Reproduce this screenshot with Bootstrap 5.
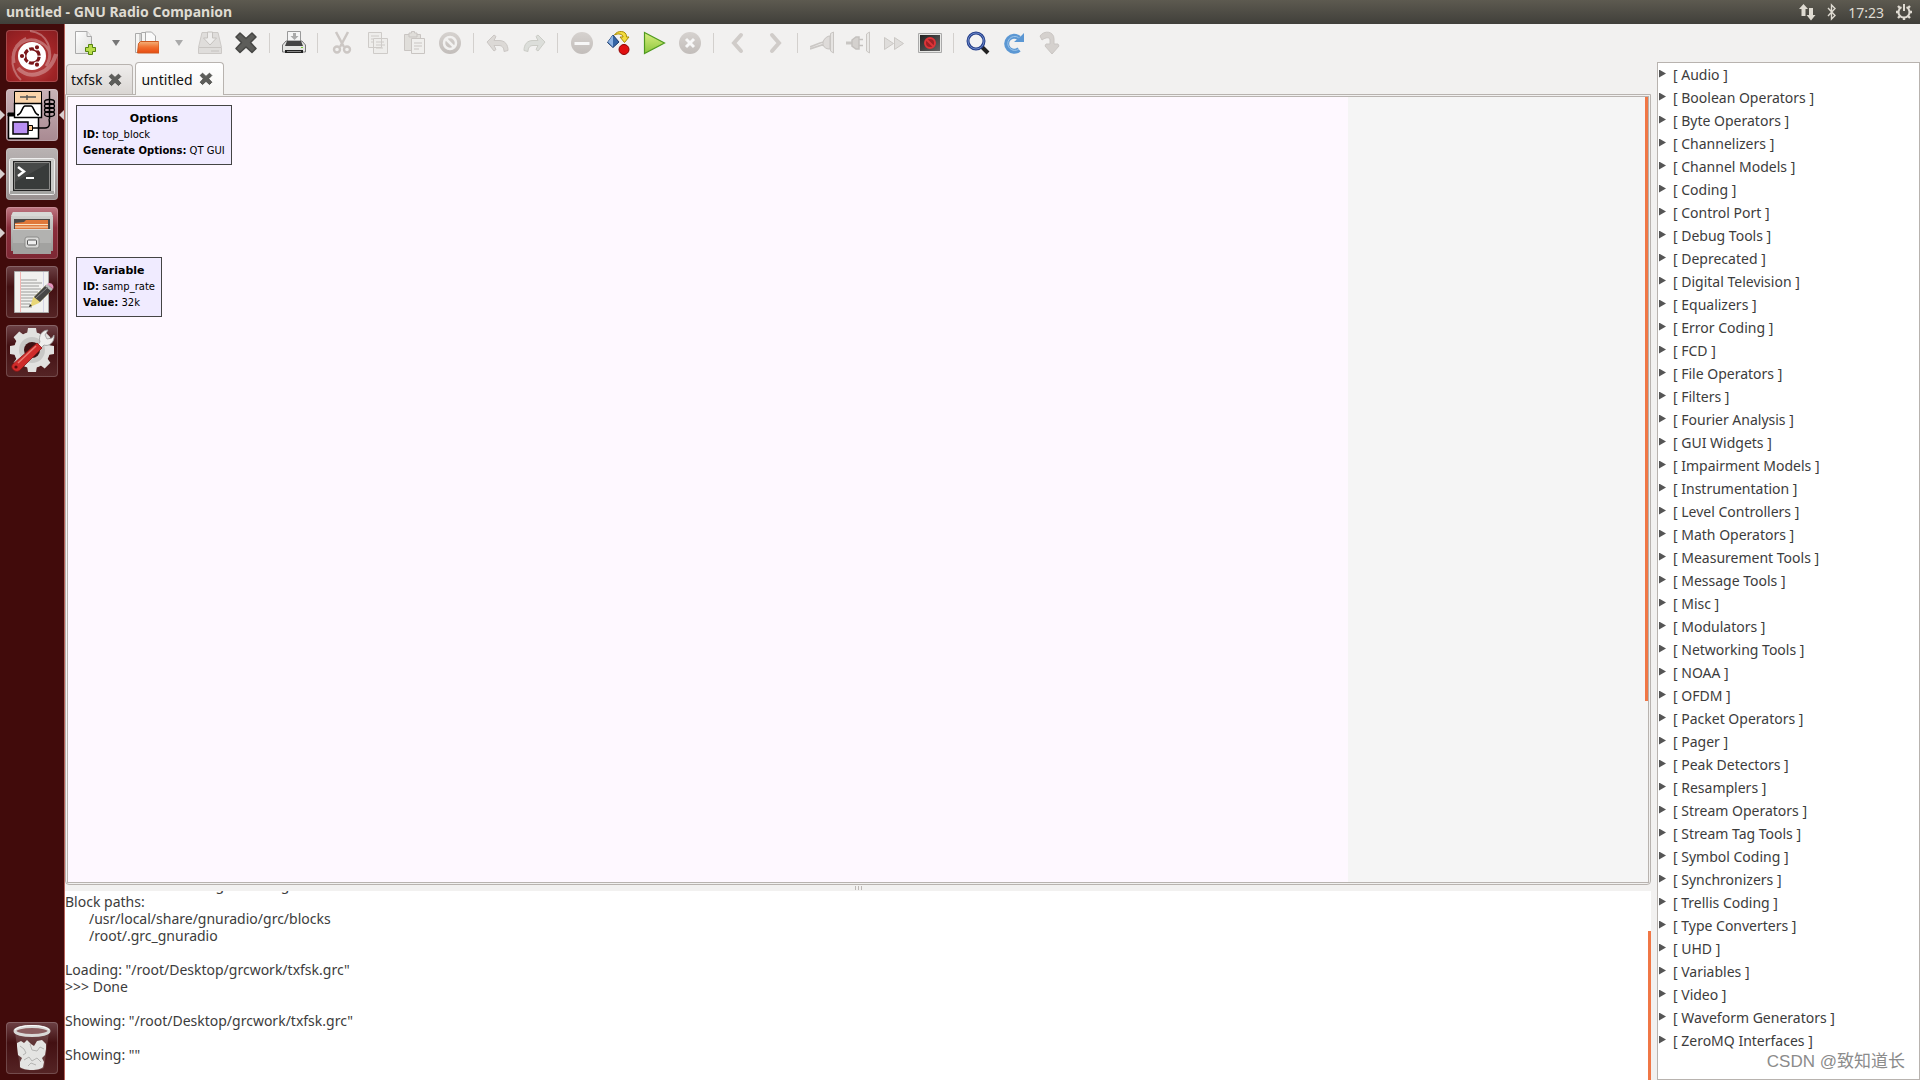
<!DOCTYPE html>
<html lang="en">
<head>
<meta charset="utf-8">
<meta name="viewport" content="width=device-width, initial-scale=1">
<title>untitled - GNU Radio Companion</title>
<link href="https://cdn.jsdelivr.net/npm/bootstrap@5.3.0/dist/css/bootstrap.min.css" rel="stylesheet">
<style>
body{font-family:"Noto Sans","Noto Sans CJK SC",sans-serif;font-size:14px;line-height:17px;color:#3c3c3c;background:#f2f1f0}
button,input,textarea{font:inherit;color:inherit}
.plain{border:0;background:none;padding:0;display:flex;align-items:center;justify-content:center}
.topbar{height:24px;flex:none;background:linear-gradient(#5d5a50,#403f3a);color:#dfdbd2;padding:0 7px 0 6px}
.topbar h1{font-size:14px;line-height:24px;font-weight:700}
.indicators{gap:11px}
.launcher{width:65px;flex:none;background:#410b0b;border-right:1px solid #b5625a;padding:6px 0 6px 6px}
.launcher nav{gap:7px}
.tile{width:52px;height:52px;border-radius:4px;position:relative;box-shadow:inset 0 0 0 1px #ffffff2e}
.tile.run::before{content:"";position:absolute;left:-6px;top:21px;border:5px solid transparent;border-left-color:#d8cfcf;border-right:0}
.tile.cur::after{content:"";position:absolute;right:-6px;top:21px;border:5px solid transparent;border-right-color:#d8cfcf;border-left:0}
.t-dash{background:radial-gradient(circle at 50% 60%,#c0504e,#a02426 60%,#871d20)}
.t-grc{background:linear-gradient(#c9b3b8,#a98a92)}
.t-term{background:linear-gradient(#b9b3b3,#989090)}
.t-files{background:linear-gradient(#c07884,#8a2d3b 40%,#7d2733)}
.t-dark{background:linear-gradient(#6d4246,#431012 40%,#552425)}
.toolbar{height:38px;padding-left:1px}
.tool{width:36px;height:38px}
.more{width:27px;height:38px}
.sep{width:12px;height:20px;flex:none;background:linear-gradient(#d3d0cd,#d3d0cd) 5px 0/1px 100% no-repeat}
.leftcol{min-width:0}
.tabs{height:32px;padding-left:1px}
.gtab{border:1px solid #b8b3af;border-bottom:0;border-radius:4px 4px 0 0;color:#111;gap:6px;height:30px;padding:0 10px 0 4px;background:linear-gradient(#efedec,#dad6d3)}
.gtab.active{height:33px;background:linear-gradient(#fff,#f5f4f2);margin:0 0 -1px 2px;padding-left:5px;position:relative;z-index:1}
.gtab svg{width:14px;height:14px}
.book{border:1px solid #b8b3af;border-radius:0 0 4px 4px;padding:1px;min-height:0}
.sheetwrap{border:1px solid #b8b3af;background:#f5f5f5;min-height:0}
.sheet{flex:0 1 1280px;background:#fef8ff;position:relative}
.thumb{width:3px;background:#f07746}
.block{position:absolute;background:#f0ebff;border:1px solid #444;color:#000;font:10px/16px "DejaVu Sans",sans-serif;padding:5px 6px;white-space:nowrap}
.block h2{font:bold 11px/16px "DejaVu Sans",sans-serif;text-align:center;margin:0}
.b-options{left:8px;top:8px}
.b-variable{left:8px;top:160px}
.grip{height:6px;gap:2px}
.grip i{width:1px;height:4px;background:#bdb8b5}
.console{height:189px;flex:none;background:#fff}
.log{height:100%;overflow:hidden;display:flex;flex-direction:column;justify-content:flex-end}
.log pre{font:inherit;margin:0;padding-bottom:17px;tab-size:24px;overflow:visible}
.lib{width:263px;flex:none;margin:38px 0 0 6px;background:#fff;border:1px solid #b8b3af;position:relative}
.lib ul{padding:0 0 0 1px}
.lib button{display:flex;align-items:center;border:0;background:none;padding:0;width:100%;height:23px;white-space:nowrap}
.lib button::before{content:"";width:7px;height:8px;margin:0 7px 2px 0;background:#555;clip-path:polygon(0 0,100% 50%,0 100%)}
.wm{position:absolute;right:14px;bottom:5px;font:17px/24px "Liberation Sans","Noto Sans CJK SC",sans-serif;color:#8b8b8b}
</style>
</head>
<body>
<svg width="0" height="0" class="position-absolute" aria-hidden="true">
<defs>
<linearGradient id="gor" x1="0" y1="0" x2="0" y2="1"><stop offset="0" stop-color="#f4b27a"/><stop offset=".5" stop-color="#f07030"/><stop offset="1" stop-color="#e84a10"/></linearGradient>
<linearGradient id="ggr" x1="0" y1="0" x2="0" y2="1"><stop offset="0" stop-color="#d9ee80"/><stop offset="1" stop-color="#8cc63c"/></linearGradient>
<linearGradient id="gpg" x1="0" y1="0" x2="1" y2="1"><stop offset="0" stop-color="#fff"/><stop offset="1" stop-color="#dcdcda"/></linearGradient>
<linearGradient id="gdk" x1="0" y1="0" x2="1" y2="1"><stop offset="0" stop-color="#222"/><stop offset="1" stop-color="#666"/></linearGradient>
<linearGradient id="gmt" x1="0" y1="0" x2="0" y2="1"><stop offset="0" stop-color="#d5d5d3"/><stop offset="1" stop-color="#989896"/></linearGradient>
<linearGradient id="gds" x1="0" y1="0" x2="0" y2="1"><stop offset="0" stop-color="#d6d2cf"/><stop offset="1" stop-color="#c2bdba"/></linearGradient>
<symbol id="cross" viewBox="0 0 24 24"><path d="M2 6L6 2 12 7.500 18 2 22 6 16.500 11.500 22 17.500 18 21.500 12 16 6 21.500 2 17.500 7.500 11.500Z" fill="#5d5d5a" stroke="#474745" stroke-width="1.500" stroke-linejoin="round"/></symbol>
</defs>
</svg>
<div class="d-flex flex-column vh-100 overflow-hidden">
<header class="topbar d-flex align-items-center justify-content-between">
<h1 class="m-0">untitled - GNU Radio Companion</h1>
<div class="indicators d-flex align-items-center">
<button class="plain" aria-label="Network"><svg width="18" height="18" viewBox="0 0 18 18" fill="#dfdbd2"><path d="M5.500 1L10 6H7.500v7h-4V6H1zM11 5h4v7h2.500L13 17.500 8.500 12H11z"/></svg></button>
<button class="plain" aria-label="Bluetooth"><svg width="10" height="18" viewBox="0 0 10 18" fill="none" stroke="#dfdbd2" stroke-width="1.400"><path d="M1 5l7 7.500-3.500 3.500V2L8 5.500 1 13"/></svg></button>
<time>17:23</time>
<button class="plain" aria-label="Session"><svg width="18" height="18" viewBox="0 0 18 18" fill="none" stroke="#dfdbd2"><path d="M6.500 4.200a5.500 5.500 0 1 0 5 0" stroke-width="2"/><path d="M9 1v7" stroke-width="2"/><path d="M3 3l2 2M15 3l-2 2M1 9h2.500M14.500 9H17M3 15l2-2M15 15l-2-2M9 14v3" stroke-width="2.400"/></svg></button>
</div>
</header>
<div class="d-flex flex-grow-1" style="min-height:0">
<aside class="launcher d-flex flex-column justify-content-between">
<nav class="d-flex flex-column" aria-label="Launcher">
<button class="plain tile t-dash" aria-label="Search your computer"><svg width="52" height="52" viewBox="0 0 52 52"><g fill="none" stroke="#fff" opacity=".3"><path d="M8 33C4 16 20 5 34 12s10 18 6 24" stroke-width="3"/><path d="M15 50C2 38 4 15 20 8M24 1c18 2 24 20 17 34" stroke-width="2"/><path d="M12 38c10 12 32 8 38-14" stroke-width="4"/></g><circle cx="26" cy="26" r="14" fill="#fff"/><circle cx="26" cy="26" r="7.200" fill="none" stroke="#7a1518" stroke-width="3.200" stroke-dasharray="13.500 1.600" stroke-dashoffset="-.8"/><g fill="#7a1518" stroke="#fff" stroke-width="1.200"><circle cx="16" cy="26" r="2.700"/><circle cx="31" cy="17.300" r="2.700"/><circle cx="31" cy="34.700" r="2.700"/></g></svg></button>
<button class="plain tile run cur t-grc" aria-label="GNU Radio Companion"><svg width="52" height="52" viewBox="0 0 52 52" stroke="#000"><path d="M2.500 25h30v24.500h-30z" fill="#fff" stroke-width="1.500"/><path d="M2 24h6v3H2z" fill="#000"/><path d="M8.500 2.500h27v12h-27z" fill="#fbd5ab"/><path d="M8.500 14.500h27v14h-27z" fill="#fff" stroke-width="1.400"/><path d="M14 8h16M21 6v5" stroke="#555" stroke-width="1.400"/><path d="M11 26c5 0 5-9 8-9h6c3 0 3 9 8 9" fill="none" stroke-width="1.500"/><path d="M7 33h15v12H7z" fill="#b98ff3" stroke-width="1.500"/><path d="M22.500 36.500h4v5h-4z" fill="#fbc58f"/><path d="M27 39h12c5 0 5-4 4-9M43.500 2v28" fill="none" stroke-width="1.400"/><g fill="none" stroke-width="1.300"><ellipse cx="43.500" cy="13" rx="5" ry="2.500"/><ellipse cx="43.500" cy="17" rx="5" ry="2.500"/><ellipse cx="43.500" cy="21" rx="5" ry="2.500"/><ellipse cx="43.500" cy="25" rx="5" ry="2.500"/></g></svg></button>
<button class="plain tile run t-term" aria-label="Terminal"><svg width="52" height="52" viewBox="0 0 52 52"><rect x="3.500" y="10.500" width="45" height="36" rx="2" fill="#c9c9c7" stroke="#eee"/><path d="M4 43h44v3H4z" fill="#a4a4a2"/><path d="M7 13h38v30H7z" fill="#222"/><path d="M8.500 14.500h35v27h-35z" fill="#393c3b" stroke="#8a8a88"/><path d="M9 15h34L9 34z" fill="#555" opacity=".5"/><path d="M12 19l6 4.500-6 4.500" fill="none" stroke="#fff" stroke-width="2.400"/><path d="M20 30h8" stroke="#fff" stroke-width="2"/></svg></button>
<button class="plain tile run t-files" aria-label="Files"><svg width="52" height="52" viewBox="0 0 52 52"><path d="M7 5h38l2 5v34H5V10z" fill="url(#gmt)"/><path d="M7 5h38l2 4H5z" fill="#d8d8d6"/><path d="M8 12h36v10H8z" fill="#4c4a48"/><path d="M9 16l9-1 2-2h22v9H9z" fill="#e0783a"/><path d="M9 17.500h33M9 20h33" stroke="#fce1c1"/><path d="M7 22h38v25H7z" fill="#b2b2b0"/><path d="M7 22.500h38" stroke="#d9d9d7"/><path d="M7 36h38v11H7z" fill="#a2a2a0"/><rect x="19" y="30" width="14" height="11" rx="2" fill="#d9d9d7" stroke="#8b8b89"/><rect x="21.500" y="33" width="9" height="5" rx="1" fill="#eee" stroke="#555"/></svg></button>
<button class="plain tile t-dark" aria-label="Text Editor"><svg width="52" height="52" viewBox="0 0 52 52"><path d="M8.500 5.500h34v41h-34z" fill="#f1f1ef" stroke="#aaa"/><path d="M14.500 6v40" stroke="#f1b5b2"/><path d="M37.500 6v40" stroke="#d5d5e6"/><path d="M15 14h16M15 17h21M15 20h18M15 23h20M15 26h17M15 29h19M15 32h12M15 35h14M15 38h9M15 41h11" stroke="#9b9b99"/><path d="M24 41l3-9 13-13 6 5-13 13z" fill="#e9d777"/><path d="M28 31l12-12 6 5-12 12z" fill="#484846"/><path d="M39 20l2-2 6 5-2 2z" fill="#bbb"/><path d="M41 18c3-3 8 1 6 5z" fill="#e495bd"/><path d="M23 41l1-3 2 2z" fill="#222"/><path d="M30 32l12-11" stroke="#888"/></svg></button>
<button class="plain tile t-dark" aria-label="System Settings"><svg width="52" height="52" viewBox="0 0 52 52"><g fill="#e1e1df"><circle cx="26" cy="25" r="18"/><path d="M21 9l1-6h8l1 6v32l-1 6h-8l-1-6z"/><path d="M21 9l1-6h8l1 6v32l-1 6h-8l-1-6z" transform="rotate(45 26 25)"/><path d="M21 9l1-6h8l1 6v32l-1 6h-8l-1-6z" transform="rotate(90 26 25)"/><path d="M21 9l1-6h8l1 6v32l-1 6h-8l-1-6z" transform="rotate(135 26 25)"/></g><circle cx="26" cy="25" r="13" fill="#c8c8c6"/><circle cx="26" cy="25" r="8" fill="#3f1214"/><path d="M31 21l3-4c-2-6 2-12 8-12l-3 5 2 4 5-1 2-3c1 7-5 12-10 10l-4 4z" fill="#efefed" stroke="#999" stroke-width=".8"/><path d="M31 18l5 5-22 22c-4 4-11-2-7-6z" fill="#cf2b2a" stroke="#8d1515" stroke-width=".8"/><path d="M30 21L12 38" stroke="#e97b72" stroke-width="1.500"/><circle cx="10" cy="42" r="1.600" fill="#5b0c0c"/></svg></button>
</nav>
<button class="plain tile t-dark" aria-label="Trash"><svg width="52" height="52" viewBox="0 0 52 52"><path d="M9 10h34l-5 36c-3 3-21 3-24 0z" fill="#fff" opacity=".15"/><path d="M11 21l4-2 3 2 3-3 4 4 3 2 3-5 5-1 4 4v5l-1 6-3 3 2 4-1 5c-3 4-19 4-23 0v-5l2-4-4-3-1-9z" fill="#e4e4e2"/><path d="M14 24l4 3 2 4-3 2M24 22l2 6 5 1 3-4 4 2M18 38l5-3 3 4 5-3 4 4M22 44l3-3 5 2" stroke="#b4b4b2" fill="none"/><ellipse cx="26" cy="9" rx="17" ry="4.500" fill="#8a5d5f" stroke="#d9d9d7" stroke-width="3"/><path d="M9 8c4-6 30-6 34 0" stroke="#fff" fill="none"/></svg></button>
</aside>
<main class="leftcol d-flex flex-column flex-grow-1">
<div class="toolbar d-flex align-items-center flex-shrink-0" role="toolbar" aria-label="Main toolbar">
<button class="plain tool" aria-label="New"><svg width="24" height="24" viewBox="0 0 24 24"><path d="M3.500.500H15l4.500 5v17h-16z" fill="url(#gpg)" stroke="#aaa"/><path d="M15 .500v5h4.500" fill="#eee" stroke="#aaa"/><path d="M16.500 13.500h4v3h3v4h-3v3h-4v-3h-3v-4h3z" fill="#b9dc4b" stroke="#55840f"/></svg></button>
<button class="plain more" aria-label="New options"><svg width="8" height="6"><path d="M0 0h8L4 6z" fill="#777"/></svg></button>
<button class="plain tool" aria-label="Open"><svg width="24" height="24" viewBox="0 0 24 24"><path d="M.500 2.500h6v19h-6zM7 1.500h9l4 4v7H5V3z" fill="#f5f5f4" stroke="#aaa"/><path d="M10.500 1h6l4 4v7h-10z" fill="#fafafa" stroke="#aaa"/><path d="M3.500 12.500l2-2h17.500a1 1 0 0 1 1 1V22H2.500z" fill="url(#gor)" stroke="#cf5a20"/></svg></button>
<button class="plain more" aria-label="Open recent"><svg width="8" height="6"><path d="M0 0h8L4 6z" fill="#aaa"/></svg></button>
<button class="plain tool" aria-label="Save" disabled><svg width="24" height="24" viewBox="0 0 24 24"><path d="M4 1.500h16l3.500 15v6H.500v-6z" fill="#dfdddb" stroke="#ccc9c6"/><path d="M1 16.500h22" stroke="#c8c5c2"/><path d="M9.500 1h5v6h4L12 14 5.500 7h4z" fill="#efeeed" stroke="#c5c2bf"/><path d="M13 20h8" stroke="#c5c2bf"/></svg></button>
<button class="plain tool" aria-label="Close"><svg width="24" height="24"><use href="#cross"/></svg></button>
<span class="sep"></span>
<button class="plain tool" aria-label="Print"><svg width="24" height="24" viewBox="0 0 24 24"><path d="M5.500.500h13V12h-13z" fill="#f5f5f5" stroke="#999"/><path d="M11 2h3v3h2.500l-4 4-4-4H11z" fill="#aaa"/><path d="M4 10h16l3.500 4v7H.500v-7z" fill="#e5e5e3" stroke="#777"/><path d="M5 10h14l2 5H3z" fill="#444"/><path d="M3 19h18v3H3z" fill="#222"/><path d="M5 20.500h14" stroke="#888"/><path d="M19 16.500h2" stroke="#7ad03a"/></svg></button>
<span class="sep"></span>
<button class="plain tool" aria-label="Cut" disabled><svg width="24" height="24" viewBox="0 0 24 24" fill="none" stroke="#ccc7c4"><path d="M6 1l8 15M18 1l-8 15" stroke-width="2.500"/><circle cx="7" cy="18.500" r="3" stroke-width="2.400"/><circle cx="17" cy="18.500" r="3" stroke-width="2.400"/></svg></button>
<button class="plain tool" aria-label="Copy" disabled><svg width="24" height="24" viewBox="0 0 24 24" fill="#eeedeb" stroke="#cecbc8"><path d="M2.500 1.500h13v15h-13zM7.500 7.500h14v15h-14z"/><path d="M5 5h8M5 8h2M5 11h2M10 11h8M10 14h9M10 17h7"/></svg></button>
<button class="plain tool" aria-label="Paste" disabled><svg width="24" height="24" viewBox="0 0 24 24" fill="#e0deda" stroke="#c9c5c2"><path d="M2.500 3.500h16v16h-16z"/><path d="M7 2h2.500V.500h3V2H15v4H7z"/><path d="M9.500 7.500h13v15h-13z" fill="#f0efed"/><path d="M12 12h8M12 15h8M12 18h5"/></svg></button>
<button class="plain tool" aria-label="Delete" disabled><svg width="24" height="24" viewBox="0 0 24 24"><circle cx="12" cy="12" r="11" fill="url(#gds)"/><circle cx="12" cy="12" r="6" fill="none" stroke="#f2f1f0" stroke-width="2.500"/><path d="M8 8l8 8" stroke="#f2f1f0" stroke-width="2.500"/></svg></button>
<span class="sep"></span>
<button class="plain tool" aria-label="Undo" disabled><svg width="24" height="24" viewBox="0 0 24 24"><path d="M1 11l7-7 2 1.500-2 4h5c6 0 9 4 9 10l-4 1c0-4-2-6-5-6H8l2 4L8 20z" fill="#dcd9d6" stroke="#cbc7c4" stroke-linejoin="round"/></svg></button>
<button class="plain tool" aria-label="Redo" disabled><svg width="24" height="24" viewBox="0 0 24 24"><path d="M23 11l-7-7-2 1.500 2 4h-5c-6 0-9 4-9 10l4 1c0-4 2-6 5-6h5l-2 4 2 1.500z" fill="#dcdeda" stroke="#cbccc6" stroke-linejoin="round"/></svg></button>
<span class="sep"></span>
<button class="plain tool" aria-label="Errors" disabled><svg width="24" height="24" viewBox="0 0 24 24"><circle cx="12" cy="12" r="11" fill="url(#gds)"/><path d="M4.500 12.500h15" stroke="#f7f7f7" stroke-width="3"/></svg></button>
<button class="plain tool" aria-label="Generate"><svg width="24" height="24" viewBox="0 0 24 24"><path d="M7 4l6 7-6 5.500-5.500-5z" fill="#3565a5" stroke="#1d3c6d"/><path d="M7 4v12l-5-5z" fill="#8fb4e3"/><path d="M8.500 4C11-1 21-1 20.500 6H23l-4.500 5.500L14 6h3C17 3 12 2 8.500 4z" fill="#f4dc3d" stroke="#a98b06"/><circle cx="18" cy="18.500" r="5" fill="#e01010" stroke="#8e0000"/></svg></button>
<button class="plain tool" aria-label="Execute"><svg width="24" height="24" viewBox="0 0 24 24"><path d="M2.500 1.500L22.500 12l-20 10.500z" fill="url(#ggr)" stroke="#4f9a1e" stroke-width="1.200"/></svg></button>
<button class="plain tool" aria-label="Kill" disabled><svg width="24" height="24" viewBox="0 0 24 24"><circle cx="12" cy="12" r="11" fill="url(#gds)"/><path d="M8 8l8 8M16 8l-8 8" stroke="#f7f7f7" stroke-width="3"/></svg></button>
<span class="sep"></span>
<button class="plain tool" aria-label="Rotate left" disabled><svg width="24" height="24" viewBox="0 0 24 24"><path d="M15 4l-7 8 7 8" fill="none" stroke="#d0ccc9" stroke-width="4" stroke-linecap="round"/></svg></button>
<button class="plain tool" aria-label="Rotate right" disabled><svg width="24" height="24" viewBox="0 0 24 24"><path d="M10 4l7 8-7 8" fill="none" stroke="#d0ccc9" stroke-width="4" stroke-linecap="round"/></svg></button>
<span class="sep"></span>
<button class="plain tool" aria-label="Enable" disabled><svg width="24" height="24" viewBox="0 0 24 24"><path d="M0 16l10-4 4-1M0 18l12-4 3 1" fill="none" stroke="#cbc8c5" stroke-width="1.800"/><path d="M13 11c1-3 3-5 6-6h1v13h-1c-3 0-5-2-6-4z" fill="#dedbd9" stroke="#c6c3c0"/><path d="M20.500 2.500l3-1.500v21l-3-2z" fill="#e5e3e1" stroke="#c9c6c3"/></svg></button>
<button class="plain tool" aria-label="Disable" disabled><svg width="24" height="24" viewBox="0 0 24 24"><path d="M0 12h6" stroke="#c9c6c3" stroke-width="3"/><path d="M6 9l4-3h3v12h-3l-4-3zM13 8.500h4M13 14.500h4" fill="#d4d1ce" stroke="#c4c1be" stroke-width="1.500"/><path d="M20.500 3l3-2v21l-3-2z" fill="#e9e8e6" stroke="#cac7c4"/></svg></button>
<button class="plain tool" aria-label="Bypass" disabled><svg width="24" height="24" viewBox="0 0 24 24" fill="#dfdddb" stroke="#cbc8c5"><path d="M2.500 6.500l9 6-9 6zM12.500 6.500l9 6-9 6z"/></svg></button>
<button class="plain tool" aria-label="Hide disabled blocks"><svg width="24" height="24" viewBox="0 0 24 24"><path d="M.500 2.500h23v19H.500z" fill="#e8e8e6" stroke="#aaa"/><path d="M2 4h20v16H2z" fill="url(#gdk)"/><circle cx="12" cy="12" r="5" fill="#9d2026" stroke="#dd3438" stroke-width="2"/><path d="M8.500 8.500l7 7" stroke="#dd3438" stroke-width="2"/></svg></button>
<span class="sep"></span>
<button class="plain tool" aria-label="Find blocks"><svg width="24" height="24" viewBox="0 0 24 24"><path d="M16 16l6 6" stroke="#222" stroke-width="4"/><circle cx="10" cy="10" r="8" fill="#f3f3f3" stroke="#27418b" stroke-width="3"/><circle cx="10" cy="10" r="8" fill="none" stroke="#6a88ca"/></svg></button>
<button class="plain tool" aria-label="Reload blocks"><svg width="24" height="24" viewBox="0 0 24 24"><path d="M17 18.500A7.500 7.500 0 1 1 17 7" fill="none" stroke="#5b97d3" stroke-width="5"/><path d="M12 11h10V2l-3 3z" fill="#5b97d3"/><path d="M17 18A7 7 0 1 1 16.500 6.500" fill="none" stroke="#9cc5ea"/></svg></button>
<button class="plain tool" aria-label="Open hierarchical block" disabled><svg width="24" height="24" viewBox="0 0 24 24"><path d="M2 5c4-6 14-5 14 3v5h4l1 2-7 8-7-8 1-2h4V9c0-3-4-3-8 0z" fill="#d5d1ce" stroke="#cac6c3"/></svg></button>
</div>
<div class="tabs d-flex align-items-end flex-shrink-0" role="tablist" aria-label="Flow graphs">
<div class="gtab d-flex align-items-center"><button class="plain" role="tab" aria-selected="false">txfsk</button><button class="plain" aria-label="Close txfsk"><svg><use href="#cross"/></svg></button></div>
<div class="gtab active d-flex align-items-center"><button class="plain" role="tab" aria-selected="true">untitled</button><button class="plain" aria-label="Close untitled"><svg><use href="#cross"/></svg></button></div>
</div>
<section class="book d-flex flex-grow-1">
<div class="sheetwrap d-flex justify-content-between flex-grow-1">
<div class="sheet">
<article class="block b-options"><h2>Options</h2><b>ID:</b> top_block<br><b>Generate Options:</b> QT GUI</article>
<article class="block b-variable"><h2>Variable</h2><b>ID:</b> samp_rate<br><b>Value:</b> 32k</article>
</div>
<div class="thumb" style="height:77%"></div>
</div>
</section>
<div class="grip d-flex justify-content-center align-items-center flex-shrink-0"><i></i><i></i><i></i></div>
<section class="console d-flex align-items-end" aria-label="Console">
<div class="log flex-grow-1"><pre>Preferences file: /root/.gnuradio/grc.conf
Block paths:
	/usr/local/share/gnuradio/grc/blocks
	/root/.grc_gnuradio

Loading: "/root/Desktop/grcwork/txfsk.grc"
&gt;&gt;&gt; Done

Showing: "/root/Desktop/grcwork/txfsk.grc"

Showing: ""</pre></div>
<div class="thumb" style="height:79%"></div>
</section>
</main>
<aside class="lib" aria-label="Block library">
<ul class="list-unstyled m-0">
<li><button>[ Audio ]</button></li>
<li><button>[ Boolean Operators ]</button></li>
<li><button>[ Byte Operators ]</button></li>
<li><button>[ Channelizers ]</button></li>
<li><button>[ Channel Models ]</button></li>
<li><button>[ Coding ]</button></li>
<li><button>[ Control Port ]</button></li>
<li><button>[ Debug Tools ]</button></li>
<li><button>[ Deprecated ]</button></li>
<li><button>[ Digital Television ]</button></li>
<li><button>[ Equalizers ]</button></li>
<li><button>[ Error Coding ]</button></li>
<li><button>[ FCD ]</button></li>
<li><button>[ File Operators ]</button></li>
<li><button>[ Filters ]</button></li>
<li><button>[ Fourier Analysis ]</button></li>
<li><button>[ GUI Widgets ]</button></li>
<li><button>[ Impairment Models ]</button></li>
<li><button>[ Instrumentation ]</button></li>
<li><button>[ Level Controllers ]</button></li>
<li><button>[ Math Operators ]</button></li>
<li><button>[ Measurement Tools ]</button></li>
<li><button>[ Message Tools ]</button></li>
<li><button>[ Misc ]</button></li>
<li><button>[ Modulators ]</button></li>
<li><button>[ Networking Tools ]</button></li>
<li><button>[ NOAA ]</button></li>
<li><button>[ OFDM ]</button></li>
<li><button>[ Packet Operators ]</button></li>
<li><button>[ Pager ]</button></li>
<li><button>[ Peak Detectors ]</button></li>
<li><button>[ Resamplers ]</button></li>
<li><button>[ Stream Operators ]</button></li>
<li><button>[ Stream Tag Tools ]</button></li>
<li><button>[ Symbol Coding ]</button></li>
<li><button>[ Synchronizers ]</button></li>
<li><button>[ Trellis Coding ]</button></li>
<li><button>[ Type Converters ]</button></li>
<li><button>[ UHD ]</button></li>
<li><button>[ Variables ]</button></li>
<li><button>[ Video ]</button></li>
<li><button>[ Waveform Generators ]</button></li>
<li><button>[ ZeroMQ Interfaces ]</button></li>
</ul>
<div class="wm">CSDN @致知道长</div>
</aside>
</div>
</div>
<script src="https://cdn.jsdelivr.net/npm/bootstrap@5.3.0/dist/js/bootstrap.bundle.min.js"></script>
</body>
</html>
